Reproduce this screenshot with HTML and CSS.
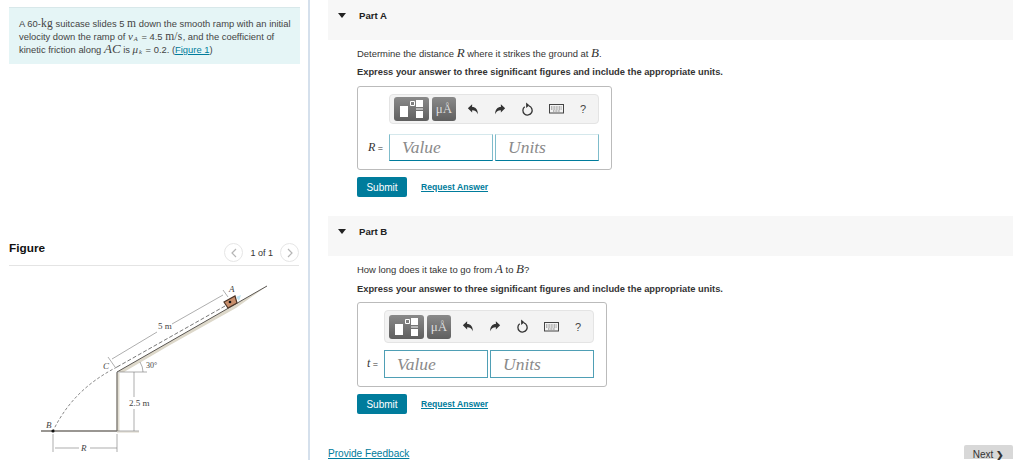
FILE: index.html
```html
<!DOCTYPE html>
<html>

<head>
    <meta charset="utf-8">
    <title>Part A</title>
    <link rel="stylesheet" href="styles.css">
</head>

<body>
    <div class="page">
        <div class="left">
            <div class="prompt">
                A 60-<span class="rm">kg</span> suitcase slides 5 <span class="rm">m</span> down the smooth ramp with an initial<br>
                velocity down the ramp of <i class="math">v<sub>A</sub></i> = 4.5 <span class="rm">m/s</span>, and the coefficient of<br>
                kinetic friction along <i class="math big">AC</i> is <i class="math">μ<sub>k</sub></i> = 0.2. (<a href="#f">Figure 1</a>)
            </div>
            <div class="figure-head">
                <h2>Figure</h2>
                <div class="pager">
                    <span class="round">
                        <svg width="6" height="10" viewBox="0 0 6 10"><path d="M5 1 1 5l4 4" fill="none" stroke="#b5b5b5" stroke-width="1.2"/></svg>
                    </span>
                    <span class="count">1 of 1</span>
                    <span class="round">
                        <svg width="6" height="10" viewBox="0 0 6 10"><path d="M1 1l4 4-4 4" fill="none" stroke="#b5b5b5" stroke-width="1.2"/></svg>
                    </span>
                </div>
            </div>
            <svg class="diagram" width="307" height="190" viewBox="0 270 307 190">
                <!-- shading under the ramp and wall -->
                <path d="M117 372 267 286 236 308 170 345 124 372Z" fill="#ddd8ca"/>
                <path d="M118 373V431" stroke="#e0dcd0" stroke-width="3"/>
                <path d="M117 432H139" stroke="#e6e2d8" stroke-width="1.500"/>
                <path d="M117 372 267 286M117 372V431" stroke="#5a5652" stroke-width="1"/>
                <path d="M41 431H117" stroke="#77736e" stroke-width="1.400"/>
                <!-- path of the suitcase -->
                <path d="M225 306 117 367" stroke="#555" stroke-width=".8" stroke-dasharray="4 2" fill="none"/>
                <path d="M117 367C90 381 68 400 53 431" stroke="#555" stroke-width=".7" stroke-dasharray="3 2" fill="none"/>
                <!-- suitcase -->
                <path d="M224 302 235 296 237 303 228 308Z" fill="#c98f6c" stroke="#4b3528" stroke-width="1.200"/>
                <path d="M236 297 241 295 239 301Z" fill="#bfe3f2"/>
                <circle cx="230" cy="302" r="1.300" fill="#111"/>
                <circle cx="53" cy="431" r="1.600" fill="#111"/>
                <!-- dimensions -->
                <g stroke="#777" stroke-width=".6" fill="none">
                    <path d="M223 295 172 324M157 332 112 359"/>
                    <path d="M223 290 228 297M108 357 115 367"/>
                    <path d="M117 372H147M134 372V397M134 409V431M117 431H139"/>
                    <path d="M140 362Q143 367 143 372"/>
                    <path d="M53 434V452M117 434V452M55 448H79M90 448H117"/>
                </g>
                <g class="fig-text">
                    <text x="158" y="329">5 m</text>
                    <text x="129" y="406">2.5 m</text>
                    <text x="146" y="368" class="small">30°</text>
                    <text x="103" y="369" font-style="italic">C</text>
                    <text x="46" y="428" font-style="italic">B</text>
                    <text x="81" y="451" font-style="italic">R</text>
                    <text x="229" y="292" font-style="italic">A</text>
                </g>
            </svg>
        </div>

        <div class="right">
            <div class="part-head"><span class="caret"></span><h3>Part A</h3></div>
            <div class="part-body">
                <p class="question">Determine the distance <i class="math big">R</i> where it strikes the ground at <i class="math big">B</i>.</p>
                <p class="express">Express your answer to three significant figures and include the appropriate units.</p>
                <div class="answer">
                    <div class="toolbar">
                        <span class="tool tool-wide">
                            <svg width="26" height="20" viewBox="0 0 26 20"><path d="M1 7h8v11H1z" fill="#fff"/><path d="M11.500 2.500h4v4h-4z" fill="none" stroke="#fff"/><path d="M17 1h7v7h-7zM17 12h7v7h-7z" fill="#fff"/><path d="M17 10h7" stroke="#fff"/></svg>
                        </span>
                        <span class="tool tool-unit">μÅ</span>
                        <span class="icons">
                            <svg width="12" height="11" viewBox="0 0 14 12"><path d="M1 4.500 6 0v3c4 0 7 3 6.500 8.500C11.500 8.500 9.500 7 6 7v2.500Z" fill="#333"/></svg>
                            <svg width="12" height="11" viewBox="0 0 14 12"><path d="M13 4.500 8 0v3C4 3 1 6 1.500 11.500 2.500 8.500 4.500 7 8 7v2.500Z" fill="#333"/></svg>
                            <svg width="13" height="15" viewBox="0 0 14 15"><path d="M8.500 3.700A5 5 0 1 1 4 4.500" fill="none" stroke="#333" stroke-width="1.400"/><path d="M5.500 0v6l3.500-3z" fill="#333"/></svg>
                            <svg width="15" height="10" viewBox="0 0 15 10"><rect x=".5" y=".5" width="14" height="8.500" fill="#f3f3f3" stroke="#444"/><path d="M2 3h11M2 5h11M4 7h7" stroke="#777" stroke-dasharray="1 .6"/></svg>
                            <span class="help">?</span>
                        </span>
                    </div>
                    <div class="entry">
                        <span class="label"><i class="math">R</i> =</span>
                        <span class="field">Value</span>
                        <span class="field">Units</span>
                    </div>
                </div>
                <div class="actions">
                    <button class="submit">Submit</button>
                    <a class="request" href="#r">Request Answer</a>
                </div>
            </div>

            <div class="part-head part-b"><span class="caret"></span><h3>Part B</h3></div>
            <div class="part-body">
                <p class="question">How long does it take to go from <i class="math big">A</i> to <i class="math big">B</i>?</p>
                <p class="express express-b">Express your answer to three significant figures and include the appropriate units.</p>
                <div class="answer answer-b">
                    <div class="toolbar">
                        <span class="tool tool-wide">
                            <svg width="26" height="20" viewBox="0 0 26 20"><path d="M1 7h8v11H1z" fill="#fff"/><path d="M11.500 2.500h4v4h-4z" fill="none" stroke="#fff"/><path d="M17 1h7v7h-7zM17 12h7v7h-7z" fill="#fff"/><path d="M17 10h7" stroke="#fff"/></svg>
                        </span>
                        <span class="tool tool-unit">μÅ</span>
                        <span class="icons">
                            <svg width="12" height="11" viewBox="0 0 14 12"><path d="M1 4.500 6 0v3c4 0 7 3 6.500 8.500C11.500 8.500 9.500 7 6 7v2.500Z" fill="#333"/></svg>
                            <svg width="12" height="11" viewBox="0 0 14 12"><path d="M13 4.500 8 0v3C4 3 1 6 1.500 11.500 2.500 8.500 4.500 7 8 7v2.500Z" fill="#333"/></svg>
                            <svg width="13" height="15" viewBox="0 0 14 15"><path d="M8.500 3.700A5 5 0 1 1 4 4.500" fill="none" stroke="#333" stroke-width="1.400"/><path d="M5.500 0v6l3.500-3z" fill="#333"/></svg>
                            <svg width="15" height="10" viewBox="0 0 15 10"><rect x=".5" y=".5" width="14" height="8.500" fill="#f3f3f3" stroke="#444"/><path d="M2 3h11M2 5h11M4 7h7" stroke="#777" stroke-dasharray="1 .6"/></svg>
                            <span class="help">?</span>
                        </span>
                    </div>
                    <div class="entry">
                        <span class="label"><i class="math">t</i> =</span>
                        <span class="field">Value</span>
                        <span class="field">Units</span>
                    </div>
                </div>
                <div class="actions">
                    <button class="submit">Submit</button>
                    <a class="request" href="#r">Request Answer</a>
                </div>
            </div>

            <div class="footer">
                <a class="feedback" href="#p">Provide Feedback</a>
                <button class="next">Next <b>❯</b></button>
            </div>
        </div>
    </div>
</body>

</html>
```

FILE: styles.css
```css
html {
    background-color: white;
}

body {
    margin: 0;
    height: 460px;
    overflow: hidden;
    font-family: "Liberation Sans", Arial, sans-serif;
    font-size: 10px;
    color: #333;
}

a {
    color: #007c9c;
}

.page {
    display: flex;
    height: 460px;
}

.left {
    width: 308px;
    flex: none;
    border-right: 2px solid #d5e0ec;
}

.prompt {
    margin: 7px 9px 0 9px;
    height: 57px;
    box-sizing: border-box;
    width: 291px;
    padding: 9px 0 0 10px;
    background: #e5f5f6;
    border-top: 1px solid #d8e8ea;
    font-size: 9.4px;
    line-height: 13px;
    color: #444;
    white-space: nowrap;
}

.math {
    font-family: "Liberation Serif", serif;
    font-style: italic;
    font-size: 11px;
    line-height: 0;
}

.math.big {
    font-size: 13px;
}

.math sub {
    font-size: 6.5px;
    line-height: 0;
    margin: 0 1px;
    vertical-align: -1px;
}

.rm {
    font-family: "Liberation Serif", serif;
    font-size: 11.5px;
    letter-spacing: .3px;
    line-height: 0;
}

.figure-head {
    margin: 176px 9px 0 9px;
    width: 290px;
    height: 25px;
    border-bottom: 1px solid #e4e4e4;
    display: flex;
    justify-content: space-between;
}

.figure-head h2 {
    margin: 0;
    font-size: 11.8px;
    line-height: 16px;
    color: #111;
}

.pager {
    display: flex;
    align-items: flex-start;
    gap: 7px;
    margin-top: 3px;
}

.count {
    font-size: 9px;
    line-height: 20px;
}

.round {
    width: 17px;
    height: 17px;
    border: 1px solid #e6e6e6;
    border-radius: 50%;
    display: flex;
    align-items: center;
    justify-content: center;
}

.diagram {
    display: block;
    margin-top: 4px;
}

.fig-text text {
    font-family: "Liberation Serif", serif;
    font-size: 9px;
    fill: #444;
}

.fig-text .small {
    font-size: 8px;
}

.right {
    margin-left: 18px;
    width: 685px;
    flex: none;
}

.part-head {
    height: 40px;
    background: #f7f7f7;
    display: flex;
    align-items: flex-start;
    padding-top: 10px;
    box-sizing: border-box;
}

.part-b {
    margin-top: 19px;
}

.part-head h3 {
    margin: 0 0 0 13px;
    font-size: 9.6px;
    line-height: 12px;
    color: #222;
}

.caret {
    margin: 3px 0 0 10px;
    width: 0;
    height: 0;
    border-left: 4px solid transparent;
    border-right: 4px solid transparent;
    border-top: 5px solid #222;
}

.part-body {
    padding-left: 29px;
}

.question {
    margin: 6px 0 0 0;
    height: 16px;
    font-size: 9.45px;
    line-height: 16px;
}

.express {
    margin: 4px 0 0 0;
    height: 13px;
    font-size: 9.33px;
    line-height: 13px;
    font-weight: bold;
}

.express-b {
    margin-top: 5px;
}

.answer {
    margin-top: 7px;
    width: 255px;
    height: 84px;
    box-sizing: border-box;
    border: 1px solid #bbb;
    border-radius: 3px;
    padding: 7px 12px 0 31px;
}

.answer-b {
    margin-top: 6px;
    width: 250px;
    height: 85px;
    padding-left: 26px;
}

.toolbar {
    height: 30px;
    box-sizing: border-box;
    background: #f3f3f3;
    border: 1px solid #e4e4e4;
    border-radius: 4px;
    display: flex;
    align-items: center;
    padding-left: 4px;
    gap: 3px;
}

.answer-b .toolbar {
    height: 33px;
}

.tool {
    height: 24px;
    border-radius: 3px;
    background: linear-gradient(#8a8a8a, #5f5f5f);
    color: #fff;
    display: flex;
    align-items: center;
    justify-content: center;
}

.tool-wide {
    width: 35px;
}

.tool-unit {
    width: 24px;
    font-family: "Liberation Serif", serif;
    font-size: 13px;
    color: #ddd;
}

.icons {
    display: flex;
    align-items: center;
    margin-left: 8px;
    gap: 15px;
}

.help {
    margin-left: 1px;
    font-size: 11px;
    color: #444;
}

.entry {
    margin: 10px 0 0 -24px;
    display: flex;
    align-items: center;
    gap: 2px;
}

.answer-b .entry {
    margin-top: 7px;
}

.label {
    width: 24px;
    margin-right: -2px;
    box-sizing: border-box;
    padding-right: 6px;
    text-align: right;
    font-size: 9px;
}

.label .math {
    font-size: 12px;
}

.field {
    width: 104px;
    height: 27px;
    box-sizing: border-box;
    border: 1px solid #d5e8ec;
    border-bottom-color: #007c9c;
    border-left-color: #7fbccb;
    border-right-color: #7fbccb;
    padding-left: 12px;
    font-family: "Liberation Serif", serif;
    font-style: italic;
    font-size: 17.5px;
    line-height: 25px;
    color: #8a8a8a;
}

.answer-b .field {
    height: 28px;
    line-height: 26px;
    border-color: #4f9fb5;
}

.actions {
    margin-top: 7px;
    height: 20px;
    display: flex;
    align-items: center;
}

.submit {
    width: 50px;
    height: 20px;
    padding: 0;
    border: none;
    border-radius: 2px;
    background: #007c9c;
    color: #fff;
    font-family: "Liberation Sans", Arial, sans-serif;
    font-size: 10px;
}

.request {
    margin-left: 14px;
    font-size: 8.6px;
    font-weight: bold;
}

.footer {
    margin-top: 31px;
    display: flex;
    justify-content: space-between;
    align-items: flex-start;
}

.feedback {
    font-size: 10.1px;
    line-height: 12px;
    margin-top: 3px;
}

.next {
    width: 49px;
    height: 14px;
    padding: 6px 0 0 0;
    border: none;
    border-radius: 2px 2px 0 0;
    background: #d8d8d8;
    color: #333;
    font-family: "Liberation Sans", Arial, sans-serif;
    font-size: 10px;
    line-height: 8px;
    text-align: center;
}

.next b {
    font-size: 9px;
}
```
